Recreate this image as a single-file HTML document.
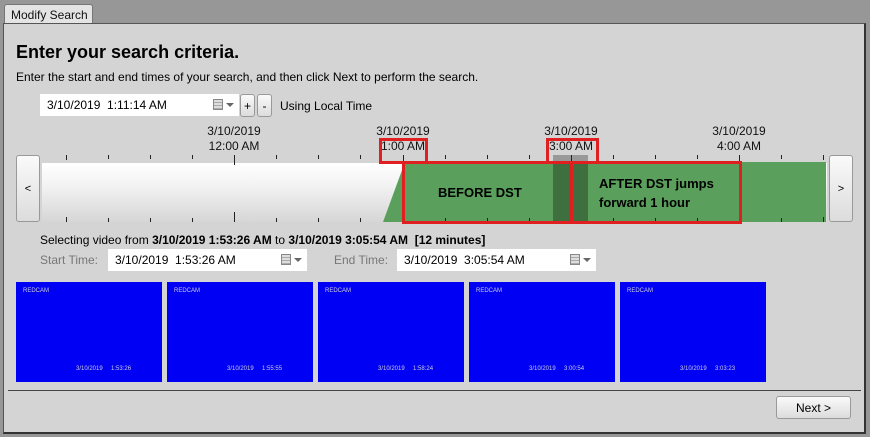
<!DOCTYPE html>
<html><head><style>
*{margin:0;padding:0;box-sizing:border-box}
body{width:870px;height:437px;background:#979797;font-family:"Liberation Sans",sans-serif;font-size:12px;color:#000;position:relative;overflow:hidden}
.a{position:absolute}
.tab{left:4px;top:4px;width:89px;height:20px;background:#e4e4e4;border:1px solid #777;border-bottom:none;border-radius:3px 3px 0 0;font-size:12px;padding:3px 0 0 6px;color:#111}
.panel{left:3px;top:23px;width:863px;height:411px;background:#d4d4d4;border:1px solid #555;border-right:2px solid #333;border-bottom:2px solid #333}
.box{background:#fff;height:22px;font-size:12px;padding:4px 0 0 7px}
.cal{position:absolute;top:5px;width:10px;height:11px;border:1px solid #888;background:repeating-linear-gradient(#ddd 0 2px,#aaa 2px 3px)}
.arr{position:absolute;top:9px;border-left:4px solid transparent;border-right:4px solid transparent;border-top:4px solid #666}
.btn{background:linear-gradient(#fafafa,#dcdcdc);border:1px solid #999;border-radius:3px;text-align:center}
.t{position:absolute;width:1px;background:#222}
.lbl{position:absolute;text-align:center;width:80px;font-size:12px;line-height:15px;color:#111}
.red{position:absolute;border:3px solid #e02020}
.th{position:absolute;top:282px;width:146px;height:100px;background:#0000f5}
.th i{position:absolute;font-style:normal;font-size:6px;color:#ccd}
</style></head><body>
<div class="a tab">Modify Search</div>
<div class="a panel"></div>
<div class="a" style="left:16px;top:42px;font-size:18px;font-weight:bold">Enter your search criteria.</div>
<div class="a" style="left:16px;top:70px;font-size:12px">Enter the start and end times of your search, and then click Next to perform the search.</div>
<div class="a box" style="left:40px;top:94px;width:199px">3/10/2019&nbsp;&nbsp;1:11:14 AM<span class="cal" style="left:173px"></span><span class="arr" style="left:186px"></span></div>
<div class="a btn" style="left:240px;top:94px;width:15px;height:23px;padding-top:4px">+</div>
<div class="a btn" style="left:257px;top:94px;width:15px;height:23px;padding-top:4px">-</div>
<div class="a" style="left:280px;top:99px">Using Local Time</div>

<div class="lbl" style="left:194px;top:124px">3/10/2019<br>12:00 AM</div>
<div class="lbl" style="left:363px;top:124px">3/10/2019<br>1:00 AM</div>
<div class="lbl" style="left:531px;top:124px">3/10/2019<br>3:00 AM</div>
<div class="lbl" style="left:699px;top:124px">3/10/2019<br>4:00 AM</div>

<div class="a btn" style="left:16px;top:155px;width:24px;height:67px;padding-top:27px;font-size:11px">&lt;</div>
<div class="a btn" style="left:829px;top:155px;width:24px;height:67px;padding-top:27px;font-size:11px">&gt;</div>
<div class="a" style="left:42px;top:163px;width:785px;height:59px;background:linear-gradient(#fff,#f2f2f2 40%,#d6d6d6)"></div>
<svg class="a" style="left:0;top:0" width="870" height="437">
<polygon points="405,162 826,162 826,222 383,222" fill="#5aa05c"/>
<line x1="405" y1="162" x2="420" y2="162" stroke="#6070d0"/>
<rect x="553" y="162" width="35" height="60" fill="#3f6e3f"/>
<rect x="553" y="155" width="35" height="8" fill="#999"/>
</svg>
<div id="ticks"></div>
<div class="t" style="left:234px;top:155px;height:10px"></div><div class="t" style="left:234px;top:212px;height:10px"></div>
<div class="t" style="left:403px;top:155px;height:8px"></div>
<div class="t" style="left:571px;top:155px;height:10px"></div><div class="t" style="left:571px;top:212px;height:10px"></div>
<div class="t" style="left:739px;top:155px;height:8px"></div><div class="t" style="left:739px;top:215px;height:7px"></div>
<div class="t" style="left:66px;top:155px;height:5px"></div><div class="t" style="left:66px;top:217px;height:5px"></div>
<div class="t" style="left:108px;top:155px;height:4px"></div><div class="t" style="left:108px;top:218px;height:4px"></div>
<div class="t" style="left:150px;top:155px;height:4px"></div><div class="t" style="left:150px;top:218px;height:4px"></div>
<div class="t" style="left:192px;top:155px;height:4px"></div><div class="t" style="left:192px;top:218px;height:4px"></div>
<div class="t" style="left:276px;top:155px;height:4px"></div><div class="t" style="left:276px;top:218px;height:4px"></div>
<div class="t" style="left:318px;top:155px;height:4px"></div><div class="t" style="left:318px;top:218px;height:4px"></div>
<div class="t" style="left:360px;top:155px;height:4px"></div><div class="t" style="left:360px;top:218px;height:4px"></div>
<div class="t" style="left:445px;top:155px;height:4px"></div><div class="t" style="left:445px;top:218px;height:4px"></div>
<div class="t" style="left:487px;top:155px;height:4px"></div><div class="t" style="left:487px;top:218px;height:4px"></div>
<div class="t" style="left:529px;top:155px;height:4px"></div><div class="t" style="left:529px;top:218px;height:4px"></div>
<div class="t" style="left:613px;top:155px;height:4px"></div><div class="t" style="left:613px;top:218px;height:4px"></div>
<div class="t" style="left:655px;top:155px;height:4px"></div><div class="t" style="left:655px;top:218px;height:4px"></div>
<div class="t" style="left:697px;top:155px;height:4px"></div><div class="t" style="left:697px;top:218px;height:4px"></div>
<div class="t" style="left:781px;top:155px;height:4px"></div><div class="t" style="left:781px;top:218px;height:4px"></div>
<div class="t" style="left:823px;top:155px;height:5px"></div><div class="t" style="left:823px;top:217px;height:5px"></div>

<div class="red" style="left:379px;top:138px;width:49px;height:26px"></div>
<div class="red" style="left:546px;top:138px;width:53px;height:26px"></div>
<div class="red" style="left:402px;top:161px;width:171px;height:63px"></div>
<div class="red" style="left:569px;top:161px;width:173px;height:63px"></div>
<div class="a" style="left:438px;top:185px;font-size:13px;font-weight:bold">BEFORE DST</div>
<div class="a" style="left:599px;top:174px;font-size:13px;font-weight:bold;line-height:19px">AFTER DST jumps<br>forward 1 hour</div>

<div class="a" style="left:40px;top:233px">Selecting video from <b>3/10/2019 1:53:26 AM</b> to <b>3/10/2019 3:05:54 AM</b> &nbsp;<b>[12 minutes]</b></div>
<div class="a" style="left:40px;top:253px;color:#777">Start Time:</div>
<div class="a box" style="left:108px;top:249px;width:199px">3/10/2019&nbsp;&nbsp;1:53:26 AM<span class="cal" style="left:173px"></span><span class="arr" style="left:186px"></span></div>
<div class="a" style="left:334px;top:253px;color:#777">End Time:</div>
<div class="a box" style="left:397px;top:249px;width:199px">3/10/2019&nbsp;&nbsp;3:05:54 AM<span class="cal" style="left:173px"></span><span class="arr" style="left:186px"></span></div>

<div class="th" style="left:16px"><i style="left:7px;top:6px">REDCAM</i><i style="left:60px;top:84px">3/10/2019 &nbsp;&nbsp;&nbsp; 1:53:26</i></div>
<div class="th" style="left:167px"><i style="left:7px;top:6px">REDCAM</i><i style="left:60px;top:84px">3/10/2019 &nbsp;&nbsp;&nbsp; 1:55:55</i></div>
<div class="th" style="left:318px"><i style="left:7px;top:6px">REDCAM</i><i style="left:60px;top:84px">3/10/2019 &nbsp;&nbsp;&nbsp; 1:58:24</i></div>
<div class="th" style="left:469px"><i style="left:7px;top:6px">REDCAM</i><i style="left:60px;top:84px">3/10/2019 &nbsp;&nbsp;&nbsp; 3:00:54</i></div>
<div class="th" style="left:620px"><i style="left:7px;top:6px">REDCAM</i><i style="left:60px;top:84px">3/10/2019 &nbsp;&nbsp;&nbsp; 3:03:23</i></div>

<div class="a" style="left:8px;top:390px;width:853px;height:1px;background:#444"></div>
<div class="a btn" style="left:776px;top:396px;width:75px;height:23px;padding-top:4px;font-size:12px">Next &gt;</div>
</body></html>
